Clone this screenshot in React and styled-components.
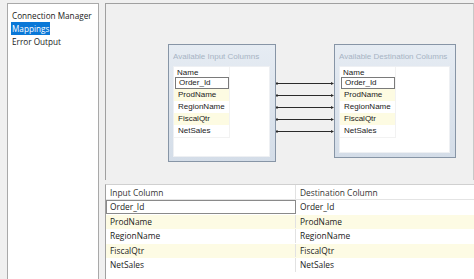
import React from 'react';
import styled, { createGlobalStyle } from 'styled-components';

const GlobalStyle = createGlobalStyle`
  html, body {
    margin: 0;
    padding: 0;
    background: #f0f0f0;
    overflow: hidden;
  }
`;

const Page = styled.div`
  display: flex;
  height: 279px;
  width: 474px;
  padding-top: 3px;
  box-sizing: border-box;
  font-family: 'Open Sans', 'Noto Sans', sans-serif;
`;

const PageList = styled.ul`
  list-style: none;
  margin: 0 0 0 7px;
  padding: 5px 0 0 3px;
  width: 87px;
  background: #fff;
  border: 1px solid #a9a9a9;
  border-bottom: none;
  flex-shrink: 0;
`;

const PageItem = styled.li`
  display: table;
  height: 13px;
  line-height: 13px;
  font-size: 8.2px;
  padding: 0 1px;
  color: ${p => (p.selected ? '#fff' : '#1a1a1a')};
  background: ${p => (p.selected ? '#0a78d7' : 'transparent')};
`;

const Main = styled.div`
  flex: 1;
  margin-left: 6px;
  display: flex;
  flex-direction: column;
  gap: 4px;
  min-width: 0;
`;

const Canvas = styled.div`
  height: 177px;
  box-sizing: border-box;
  border-top: 1px solid #a0a0a0;
  border-left: 1px solid #a0a0a0;
  border-right: 1px solid #c8c8c8;
  background: #f0f0f0;
  display: flex;
  align-items: flex-start;
  padding: 40px 0 0 62px;
`;

const ColumnBox = styled.div`
  width: ${p => p.w}px;
  height: ${p => p.h}px;
  box-sizing: border-box;
  border: 1px solid #8795a6;
  background: linear-gradient(#e6ecf3, #d4dde8);
  display: flex;
  flex-direction: column;
  padding: 0 5px 4px 4px;
  flex-shrink: 0;
`;

const BoxTitle = styled.div`
  height: 21px;
  line-height: 24px;
  font-family: 'Liberation Sans', Arial, sans-serif;
  font-size: 8px;
  color: #a7b4c4;
  white-space: nowrap;
  overflow: hidden;
`;

const BoxBody = styled.div`
  flex: 1;
  background: #fff;
  border: 1px solid #eef0f3;
  font-family: 'Liberation Sans', Arial, sans-serif;
  font-size: 8px;
  color: #222;
`;

const FieldList = styled.div`
  width: 55px;
  border-right: 1px solid #f2f2f2;
  border-bottom: 1px solid #f2f2f2;
`;

const FieldHead = styled.div`
  height: 10px;
  line-height: 11px;
  padding-left: 3px;
`;

const Field = styled.div`
  height: 12px;
  box-sizing: border-box;
  background: ${p => (p.alt ? '#fdfbe2' : '#fff')};
  border: ${p => (p.focused ? '1px solid #7a7a7a' : 'none')};
  margin-left: ${p => (p.focused ? '1px' : '0')};
  line-height: ${p => (p.focused ? '10px' : '12px')};
  padding-left: ${p => (p.focused ? '3px' : '4px')};
`;

const Links = styled.svg`
  flex-shrink: 0;
  display: block;
`;

const Grid = styled.div`
  flex: 1;
  background: #fff;
  border-left: 1px solid #a0a0a0;
  border-top: 1px solid #d0d0d0;
  font-size: 8.4px;
  color: #222;
`;

const GridRow = styled.div`
  display: grid;
  grid-template-columns: 190px 1fr;
  height: ${p => (p.head ? '15px' : '14.5px')};
  background: ${p => (p.alt ? '#fdfbe4' : '#fff')};
  border-bottom: 1px solid ${p => (p.head ? '#e4e4e4' : 'transparent')};
  box-sizing: border-box;
`;

const Cell = styled.div`
  display: flex;
  align-items: center;
  box-sizing: border-box;
  white-space: nowrap;
  color: ${p => (p.head ? '#333' : '#222')};
  border-right: ${p => (p.last ? 'none' : '1px solid #e2e2e2')};
  border: ${p => (p.focused ? '1px solid #8a8a8a' : undefined)};
  padding-left: ${p => (p.focused ? '3px' : '4px')};
`;

const columns = ['Order_Id', 'ProdName', 'RegionName', 'FiscalQtr', 'NetSales'];

const FieldBox = ({ title, w, h }) => (
  <ColumnBox w={w} h={h}>
    <BoxTitle>{title}</BoxTitle>
    <BoxBody>
      <FieldList>
        <FieldHead>Name</FieldHead>
        {columns.map((c, i) => (
          <Field key={c} focused={i === 0} alt={i % 2 === 1}>
            {c}
          </Field>
        ))}
      </FieldList>
    </BoxBody>
  </ColumnBox>
);

const Connectors = () => (
  <Links width="58" height="118" viewBox="0 0 58 118">
    {columns.map((c, i) => {
      const y = 39.5 + i * 12;
      return (
        <g key={c}>
          <line x1="1" y1={y} x2="57" y2={y} stroke="#2a2a2a" strokeWidth="1" />
          <rect x="0" y={y - 1} width="2" height="2" fill="#2a2a2a" />
          <path d={`M58 ${y} L55 ${y - 1.5} L55 ${y + 1.5} Z`} fill="#2a2a2a" />
        </g>
      );
    })}
  </Links>
);

export default function App() {
  return (
    <>
      <GlobalStyle />
      <Page>
        <PageList>
          <PageItem>Connection Manager</PageItem>
          <PageItem selected>Mappings</PageItem>
          <PageItem>Error Output</PageItem>
        </PageList>
        <Main>
          <Canvas>
            <FieldBox title="Available Input Columns" w={108} h={118} />
            <Connectors />
            <FieldBox title="Available Destination Columns" w={122} h={114} />
          </Canvas>
          <Grid>
            <GridRow head>
              <Cell head>Input Column</Cell>
              <Cell head last>Destination Column</Cell>
            </GridRow>
            {columns.map((c, i) => (
              <GridRow key={c} alt={i % 2 === 1}>
                <Cell focused={i === 0}>{c}</Cell>
                <Cell last>{c}</Cell>
              </GridRow>
            ))}
          </Grid>
        </Main>
      </Page>
    </>
  );
}
